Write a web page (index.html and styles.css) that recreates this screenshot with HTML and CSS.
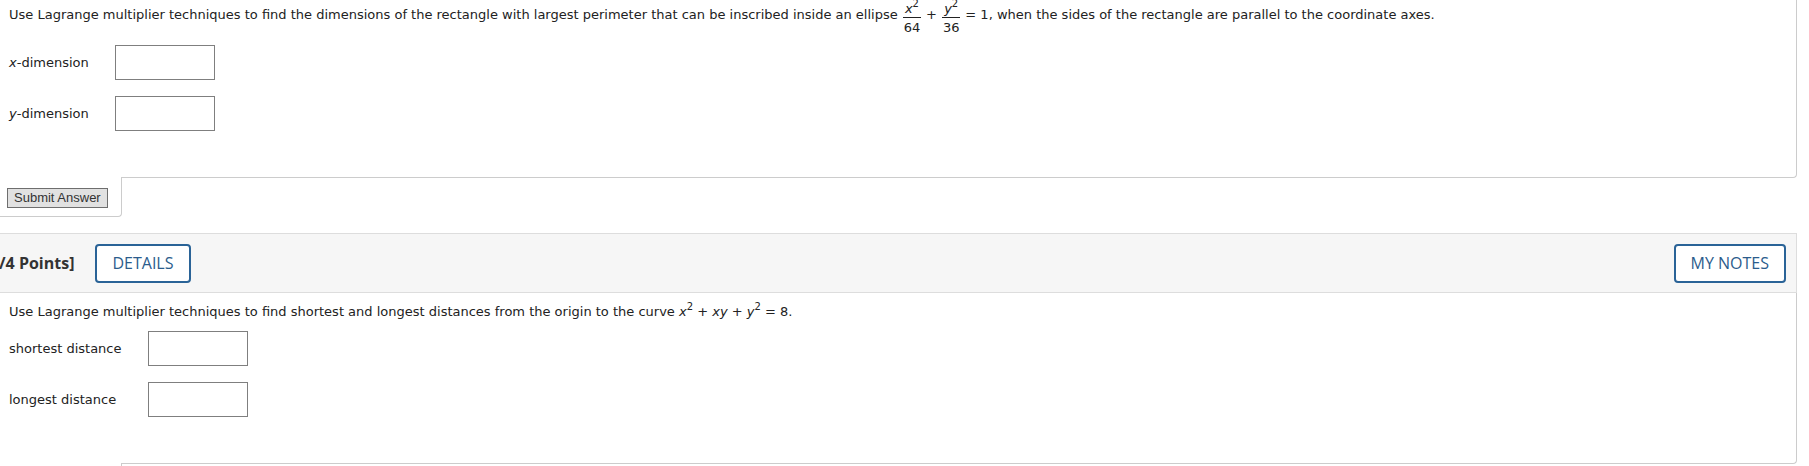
FILE: index.html
```html
<!DOCTYPE html>
<html lang="en">
<head>
<meta charset="utf-8">
<title>Lagrange multipliers</title>
<link rel="stylesheet" href="styles.css">
</head>
<body>
<div class="page">
  <section class="q q-first">
    <div class="q-body">
      <p class="q-text">Use Lagrange multiplier techniques to find the dimensions of the rectangle with largest perimeter that can be inscribed inside an ellipse <span class="frac"><span class="num"><i>x</i><sup>2</sup></span><span class="den">64</span></span> + <span class="frac"><span class="num"><i>y</i><sup>2</sup></span><span class="den">36</span></span> = 1, when the sides of the rectangle are parallel to the coordinate axes.</p>
      <div class="answers">
        <span class="ans-label"><i>x</i>-dimension</span><input class="ans-box" type="text">
        <span class="ans-label"><i>y</i>-dimension</span><input class="ans-box" type="text">
      </div>
    </div>
    <div class="q-tab"><button class="submit" type="button">Submit Answer</button></div>
  </section>

  <section class="q q-second">
    <header class="q-head">
      <div class="q-head-left">
        <span class="points">/4 Points]</span>
        <button class="btn-outline" type="button">DETAILS</button>
      </div>
      <button class="btn-outline" type="button">MY NOTES</button>
    </header>
    <div class="q-body">
      <p class="q-text q-text-plain">Use Lagrange multiplier techniques to find shortest and longest distances from the origin to the curve <i>x</i><sup>2</sup> + <i>xy</i> + <i>y</i><sup>2</sup> = 8.</p>
      <div class="answers">
        <span class="ans-label">shortest distance</span><input class="ans-box" type="text">
        <span class="ans-label">longest distance</span><input class="ans-box" type="text">
      </div>
    </div>
    <div class="q-tab"></div>
  </section>
</div>
</body>
</html>
```

FILE: styles.css
```css
html, body {
  margin: 0;
  padding: 0;
  background: #ffffff;
}

body {
  font-family: "DejaVu Sans", Verdana, sans-serif;
  font-size: 13px;
  color: #222222;
}

.page {
  width: 1797px;
}

.q-body {
  border-right: 1px solid #cccccc;
  border-bottom: 1px solid #cccccc;
  border-bottom-right-radius: 4px;
  padding-bottom: 46px;
}

.q-text {
  margin: 0;
  padding: 2px 9px 0;
  line-height: 16px;
}

.q-text sup {
  font-size: 10px;
  line-height: 0;
  vertical-align: 6px;
}

.frac {
  display: inline-flex;
  flex-direction: column;
  align-items: stretch;
  text-align: center;
  vertical-align: 6px;
  margin: 0 1px;
}

.frac .num {
  line-height: 13px;
  padding: 0 2px 2px;
  border-bottom: 1px solid #222222;
}

.frac .den {
  line-height: 13px;
  padding-top: 3px;
}

.answers {
  display: grid;
  grid-template-columns: auto 100px;
  justify-content: start;
  align-items: center;
  column-gap: 26px;
  row-gap: 16px;
  margin-top: 11px;
  padding-left: 9px;
}

.ans-label {
  line-height: 16px;
}

.ans-box {
  box-sizing: border-box;
  width: 100px;
  height: 35px;
  margin: 0;
  padding: 0 4px;
  border: 1px solid #7f7f7f;
  border-radius: 0;
  background: #ffffff;
  font: inherit;
}

.q-tab {
  box-sizing: border-box;
  width: 122px;
  margin-top: -1px;
  background: #ffffff;
  border-right: 1px solid #cccccc;
  border-bottom: 1px solid #cccccc;
  border-bottom-right-radius: 4px;
  padding: 11px 0 8px 7px;
}

.submit {
  font-family: "Liberation Sans", Arial, sans-serif;
  font-size: 13px;
  line-height: 16px;
  color: #333333;
  background: #e1e1e1;
  border: 1px solid #6e6e6e;
  border-radius: 0;
  padding: 1px 6px;
  margin: 0;
  display: block;
}

.q-second {
  margin-top: 16px;
}

.q-second .q-tab {
  height: 12px;
  padding: 0;
}

.q-head {
  display: flex;
  justify-content: space-between;
  align-items: center;
  height: 58px;
  padding-right: 10px;
  background: #f6f6f6;
  border-top: 1px solid #dddddd;
  border-bottom: 1px solid #dddddd;
  border-right: 1px solid #dddddd;
  font-family: "Open Sans", sans-serif;
}

.q-head-left {
  display: flex;
  align-items: center;
  gap: 21px;
  margin-left: -1px;
}

.points {
  font-size: 16px;
  font-weight: 700;
  color: #333333;
}

.btn-outline {
  font-family: "Open Sans", sans-serif;
  font-size: 16px;
  line-height: 22px;
  color: #2b5c8c;
  background: #ffffff;
  border: 2px solid #2a6397;
  border-radius: 4px;
  padding: 6px 15px 7px;
  margin: 0;
}

.q-text-plain {
  padding-top: 11px;
}
```
